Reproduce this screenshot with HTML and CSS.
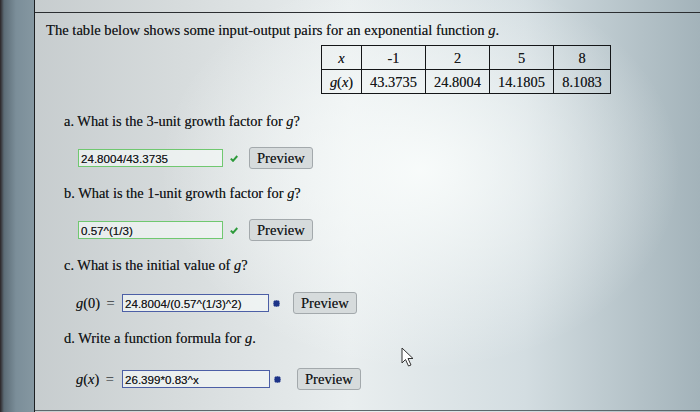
FILE: index.html
```html
<!DOCTYPE html>
<html lang="en">
    <head>
        <meta charset="UTF-8" />
        <link rel="stylesheet" href="styles.css">
        <title>Exponential function</title>
    </head>

    <body>
        <div class="screen">
            <div class="edge"></div>
            <section class="panel">
                <p class="intro">
                    The table below shows some input-output pairs for an exponential function <i>g</i>.
                </p>
                <table class="pairs">
                    <tr>
                        <td class="head"><i>x</i></td>
                        <td>-1</td>
                        <td>2</td>
                        <td>5</td>
                        <td>8</td>
                    </tr>
                    <tr>
                        <td class="head"><i>g</i>(<i>x</i>)</td>
                        <td>43.3735</td>
                        <td>24.8004</td>
                        <td>14.1805</td>
                        <td>8.1083</td>
                    </tr>
                </table>

                <p class="prompt first">a. What is the 3-unit growth factor for <i>g</i>?</p>
                <div class="answer-row">
                    <span class="answer correct">24.8004/43.3735</span>
                    <span class="mark ok">
                        <svg width="8" height="7" viewBox="0 0 8 7">
                            <path d="M0.8 3.6 L3 5.8 L7.3 1" fill="none" stroke="#2c9a3a" stroke-width="2"/>
                        </svg>
                    </span>
                    <button class="preview">Preview</button>
                </div>

                <p class="prompt">b. What is the 1-unit growth factor for <i>g</i>?</p>
                <div class="answer-row">
                    <span class="answer correct">0.57^(1/3)</span>
                    <span class="mark ok">
                        <svg width="8" height="7" viewBox="0 0 8 7">
                            <path d="M0.8 3.6 L3 5.8 L7.3 1" fill="none" stroke="#2c9a3a" stroke-width="2"/>
                        </svg>
                    </span>
                    <button class="preview">Preview</button>
                </div>

                <p class="prompt">c. What is the initial value of <i>g</i>?</p>
                <div class="answer-row labelled">
                    <span class="label"><i>g</i>(0) <span class="eq">=</span></span>
                    <span class="answer pending">24.8004/(0.57^(1/3)^2)</span>
                    <span class="mark wait">
                        <svg width="7" height="7" viewBox="0 0 7 7">
                            <path d="M1 1 L6 6 M6 1 L1 6 M3.5 0.3 V6.7 M0.3 3.5 H6.7" stroke="#1c3388" stroke-width="2"/>
                        </svg>
                    </span>
                    <button class="preview">Preview</button>
                </div>

                <p class="prompt">d. Write a function formula for <i>g</i>.</p>
                <div class="answer-row labelled last">
                    <span class="label"><i>g</i>(<i>x</i>) <span class="eq">=</span></span>
                    <span class="answer pending wide">26.399*0.83^x</span>
                    <span class="mark wait">
                        <svg width="7" height="7" viewBox="0 0 7 7">
                            <path d="M1 1 L6 6 M6 1 L1 6 M3.5 0.3 V6.7 M0.3 3.5 H6.7" stroke="#1c3388" stroke-width="2"/>
                        </svg>
                    </span>
                    <button class="preview">Preview</button>
                </div>
            </section>

            <svg class="cursor" width="14" height="20" viewBox="0 0 14 20">
                <path d="M1 1 L1 16 L4.5 12.5 L7.5 19 L10 18 L7 11.5 L12 11.5 Z" fill="#ffffff" stroke="#333" stroke-width="1"/>
            </svg>
        </div>
    </body>
</html>
```

FILE: styles.css
```css
html,
body {
    margin: 0;
    height: 100%;
}

body {
    font-family: "Liberation Serif", "Times New Roman", serif;
    color: #16181a;
    overflow: hidden;
}

.screen {
    position: relative;
    display: flex;
    width: 700px;
    height: 412px;
    background:
        radial-gradient(ellipse 260px 200px at 420px 170px, rgba(250, 253, 252, 0.9), rgba(250, 253, 252, 0) 100%),
        linear-gradient(90deg, #c3c9cb 0%, #d6dbdc 25%, #e9eeef 50%, #d3dde1 75%, #a3b3ba 100%);
}

.edge {
    width: 34px;
    flex-shrink: 0;
    background: linear-gradient(90deg, #2a2426 0px, #5c6c76 4px, #7b8e99 16px, #8597a1 34px);
    border-right: 1px solid #1c1f22;
}

.panel {
    flex: 1;
    margin-top: 12px;
    border-top: 1px solid #2b2e31;
    border-bottom: 1px solid #5d676c;
    height: 397px;
    font-size: 14.4px;
    line-height: 18px;
    text-shadow: 0 0 0.5px rgba(20, 22, 24, 0.6);
}

.intro {
    margin: 8px 0 0 11px;
    font-size: 14.6px;
}

.pairs {
    margin: 6px 0 0 286px;
    border-collapse: collapse;
    font-size: 14.4px;
}

.pairs td {
    border: 1.5px solid #141618;
    height: 23px;
    padding: 0;
    width: 63px;
    text-align: center;
}

.pairs td:last-child {
    width: 56px;
}

.pairs td.head {
    width: 39px;
}

.prompt {
    margin: 15px 0 0 29px;
}

.prompt.first {
    margin-top: 18px;
}

.answer-row {
    display: flex;
    align-items: center;
    height: 22px;
    margin: 17px 0 0 43px;
}

.answer-row.labelled {
    margin-left: 41px;
    margin-top: 18px;
}

.answer-row.last {
    margin-top: 21px;
}

.label {
    width: 46px;
    white-space: nowrap;
}

.eq {
    margin-left: 3px;
    color: #4a4f53;
}

.answer {
    box-sizing: border-box;
    width: 145px;
    height: 18px;
    padding: 1px 2px;
    font-family: "Liberation Sans", Arial, sans-serif;
    font-size: 11.6px;
    line-height: 15px;
    background: rgba(244, 248, 247, 0.7);
}

.answer.correct {
    border: 1px solid #70c870;
}

.answer.pending {
    width: 147px;
    border: 1px solid #4c5fa6;
}

.answer.wide {
    width: 148px;
}

.mark svg {
    display: block;
    margin: 0 auto;
}

.mark.ok {
    width: 18px;
    margin-left: 2px;
}

.mark.wait {
    width: 13px;
    margin-left: 1px;
}

.preview {
    margin-left: 6px;
    height: 22px;
    padding: 0 7px;
    font-family: "Liberation Serif", "Times New Roman", serif;
    font-size: 14.6px;
    color: #16181a;
    background: #d6dbdc;
    border: 1px solid #a3a9ac;
    border-radius: 3px;
    text-shadow: 0 0 0.5px rgba(20, 22, 24, 0.6);
}

.labelled .preview {
    margin-left: 10px;
}

.last .preview {
    margin-left: 13px;
}

.cursor {
    position: absolute;
    left: 401px;
    top: 347px;
}
```
